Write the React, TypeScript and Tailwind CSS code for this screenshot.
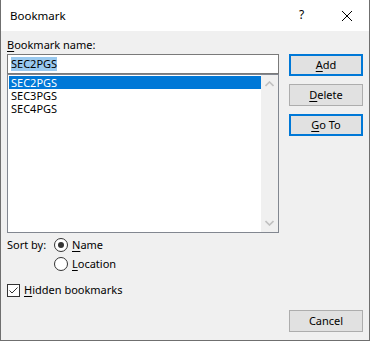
import React from "react";

const U = ({ children }: { children: React.ReactNode }) => <span className="underline underline-offset-2">{children}</span>;

function Btn({ children, def }: { children: React.ReactNode; def?: boolean }) {
  return (
    <div
      className={
        "h-[22px] w-[74px] flex items-center justify-center bg-[#e1e1e1] text-black " +
        (def ? "border-2 border-[#0078d7]" : "border border-[#adadad]")
      }
    >
      {children}
    </div>
  );
}

export default function App() {
  return (
    <div
      className="w-[370px] h-[341px] bg-[#f0f0f0] border-x border-b border-[#6f6f6f] flex flex-col text-[11px] leading-[14px] text-black"
      style={{ fontFamily: '"Segoe UI", "Noto Sans", sans-serif' }}
    >
      <div className="h-[31px] bg-white flex items-center relative shrink-0">
        <span className="ml-[9px] text-[11.5px]">Bookmark</span>
        <span className="absolute left-[298px] top-[8px] text-[12px]">?</span>
        <svg className="absolute left-[340px] top-[10px]" width="12" height="12" viewBox="0 0 12 12">
          <path d="M1 1 L11 11 M11 1 L1 11" stroke="#000" strokeWidth="1" />
        </svg>
      </div>
      <div className="flex flex-1 pl-[6px]">
        <div className="w-[272px] flex flex-col">
          <div className="mt-[7px] h-[15px]">
            <U>B</U>ookmark name:
          </div>
          <div className="mt-[1px] h-[20px] bg-white border border-[#7a7a7a] flex items-center pl-[3px]">
            <span className="bg-[#99c9ef] h-[14px] flex items-center">SEC2PGS</span>
          </div>
          <div className="h-[159px] bg-white border border-[#828790] flex">
            <div className="flex-1 pt-[1px] pl-[1px] leading-[13px]">
              <div className="h-[13px] bg-[#0078d7] text-white flex items-center pl-[2px]">SEC2PGS</div>
              <div className="h-[13px] flex items-center pl-[2px]">SEC3PGS</div>
              <div className="h-[13px] flex items-center pl-[2px]">SEC4PGS</div>
            </div>
            <div className="w-[17px] bg-[#f0f0f0] flex flex-col justify-between items-center py-[6px]">
              <svg width="9" height="6" viewBox="0 0 9 6">
                <path d="M0.5 5 L4.5 1 L8.5 5" stroke="#c0c0c0" strokeWidth="1.6" fill="none" />
              </svg>
              <svg width="9" height="6" viewBox="0 0 9 6">
                <path d="M0.5 1 L4.5 5 L8.5 1" stroke="#c0c0c0" strokeWidth="1.6" fill="none" />
              </svg>
            </div>
          </div>
          <div className="flex mt-[5px]">
            <div className="w-[47px] h-[14px] flex items-center">Sort by:</div>
            <div className="flex flex-col gap-[5px]">
              <div className="flex items-center h-[14px]">
                <div className="w-[14px] h-[14px] rounded-full border border-[#333] bg-white flex items-center justify-center">
                  <div className="w-[6px] h-[6px] rounded-full bg-[#333]" />
                </div>
                <span className="ml-[4px]"><U>N</U>ame</span>
              </div>
              <div className="flex items-center h-[14px]">
                <div className="w-[14px] h-[14px] rounded-full border border-[#333] bg-white" />
                <span className="ml-[4px]"><U>L</U>ocation</span>
              </div>
            </div>
          </div>
          <div className="flex items-center mt-[12px] h-[14px]">
            <div className="w-[13px] h-[13px] border border-[#333] bg-white flex items-center justify-center">
              <svg width="11" height="11" viewBox="0 0 11 11">
                <path d="M1.5 5.5 L4 8 L9.5 2.5" stroke="#333" strokeWidth="1" fill="none" />
              </svg>
            </div>
            <span className="ml-[4px]"><U>H</U>idden bookmarks</span>
          </div>
        </div>
        <div className="ml-[10px] flex flex-col pt-[23px]">
          <Btn def><U>A</U>dd</Btn>
          <div className="mt-[8px]">
            <Btn><U>D</U>elete</Btn>
          </div>
          <div className="mt-[8px]">
            <Btn def><U>G</U>o To</Btn>
          </div>
          <div className="mt-auto mb-[8px]">
            <Btn>Cancel</Btn>
          </div>
        </div>
      </div>
    </div>
  );
}
